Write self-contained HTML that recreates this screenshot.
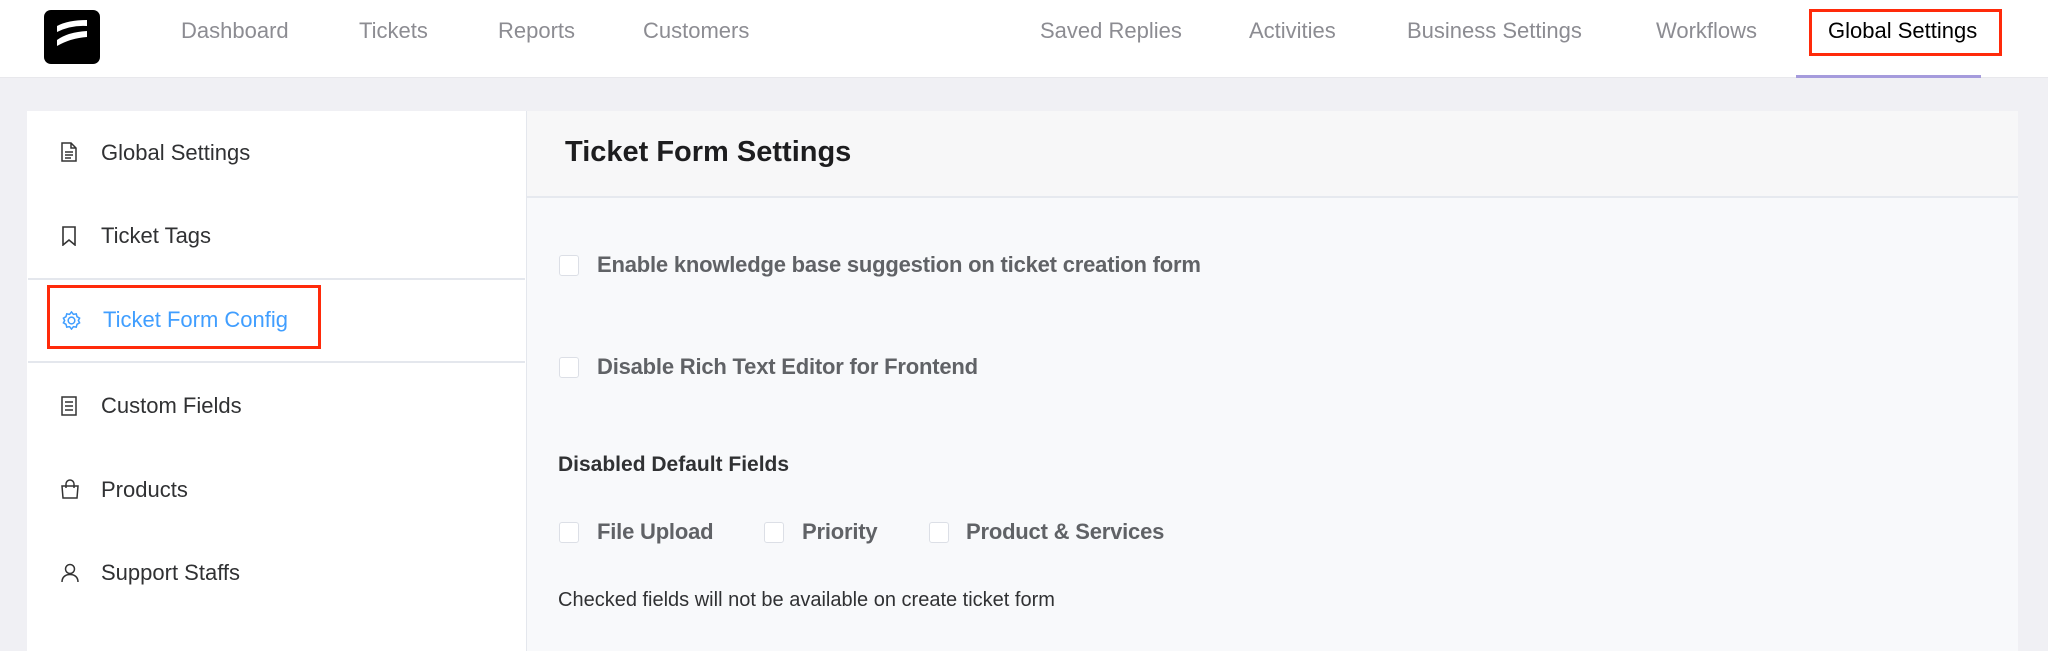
<!DOCTYPE html>
<html><head><meta charset="utf-8"><style>
*{margin:0;padding:0;box-sizing:border-box}
body{width:2048px;height:644px;overflow:hidden;background:#f0f0f4;font-family:"Liberation Sans",sans-serif;position:relative}
.a{position:absolute;white-space:nowrap}
.hdr{position:absolute;left:0;top:0;width:2048px;height:78px;background:#fff;border-bottom:1px solid #e8e8ec}
.nav{font-size:22px;color:#8c8c92;top:18px}
.side{position:absolute;left:27px;top:111px;width:499px;height:540px;background:#fff}
.si{font-size:22px;color:#303133;left:101px}
.ic{position:absolute;left:61px}
.main{position:absolute;left:526px;top:111px;width:1492px;height:540px;background:#f8f9fb;border-left:1px solid #e4e7ed}
.mh{position:absolute;left:0;top:0;width:100%;height:87px;background:#f7f7f8;border-bottom:2px solid #e6e9ef}
.cb{position:absolute;width:20px;height:21px;border:1.5px solid #dcdfe6;border-radius:3px;background:#fff}
.lb{font-size:22px;color:#606266;font-weight:bold;letter-spacing:-0.2px}
</style></head><body>
<div class="hdr"></div>
<div class="a" style="left:44px;top:10px;width:56px;height:54px;background:#000;border-radius:7px">
<svg width="56" height="54" viewBox="0 0 56 54"><path d="M13 22 L13 16 Q24 10 43 10 L43 16 Q27 15 13 22Z M13 36 L13 30 Q24 22 43 21 L43 27 Q27 28 13 36Z" fill="#fff"/></svg></div>
<div class="a nav" style="left:181px">Dashboard</div>
<div class="a nav" style="left:359px">Tickets</div>
<div class="a nav" style="left:498px">Reports</div>
<div class="a nav" style="left:643px">Customers</div>
<div class="a nav" style="left:1040px">Saved Replies</div>
<div class="a nav" style="left:1249px">Activities</div>
<div class="a nav" style="left:1407px">Business Settings</div>
<div class="a nav" style="left:1656px">Workflows</div>
<div class="a nav" style="left:1828px;color:#000">Global Settings</div>
<div class="a" style="left:1809px;top:9px;width:193px;height:47px;border:3px solid #ff2a0a"></div>
<div class="a" style="left:1796px;top:75px;width:185px;height:3px;background:#a59bdc"></div>

<div class="side"></div>
<svg class="ic" style="top:142px" width="16" height="20" viewBox="0 0 16 20" fill="none" stroke="#333" stroke-width="1.5"><path d="M1 1h9l5 5v13H1z M10 1v5h5 M4 10h8 M4 13h8 M4 16h6"/></svg>
<div class="a si" style="top:140px">Global Settings</div>
<svg class="ic" style="top:226px" width="16" height="20" viewBox="0 0 16 20" fill="none" stroke="#333" stroke-width="1.6"><path d="M2 1h12v18l-6-5-6 5z"/></svg>
<div class="a si" style="top:223px">Ticket Tags</div>
<div class="a" style="left:28px;top:278px;width:497px;height:85px;background:#fff;border-top:2px solid #e4e7ed;border-bottom:2px solid #e4e7ed"></div>
<svg class="ic" style="top:311px;left:62px" width="19" height="19" viewBox="0 0 20 20" fill="none" stroke="#409eff" stroke-width="1.6"><path d="M10 1l2 2.5 3-.5.8 3 2.7 1.5-1.3 2.5 1.3 2.5-2.7 1.5-.8 3-3-.5L10 19l-2-2.5-3 .5-.8-3L1.5 12.5 2.8 10 1.5 7.5 4.2 6l.8-3 3 .5z"/><circle cx="10" cy="10" r="3.5"/></svg>
<div class="a si" style="top:307px;left:103px;color:#409eff">Ticket Form Config</div>
<div class="a" style="left:47px;top:285px;width:274px;height:64px;border:3px solid #ff2a0a"></div>
<svg class="ic" style="top:396px" width="16" height="20" viewBox="0 0 16 20" fill="none" stroke="#333" stroke-width="1.5"><path d="M1 1h14v18H1z M4 6h8 M4 10h8 M4 14h8"/></svg>
<div class="a si" style="top:393px">Custom Fields</div>
<svg class="ic" style="top:479px" width="18" height="20" viewBox="0 0 18 20" fill="none" stroke="#333" stroke-width="1.5"><path d="M1 7h16l-1 12H2z M5 9V5a4 4 0 0 1 8 0v4"/></svg>
<div class="a si" style="top:477px">Products</div>
<svg class="ic" style="top:563px" width="18" height="20" viewBox="0 0 18 20" fill="none" stroke="#333" stroke-width="1.5"><circle cx="9" cy="6" r="4.5"/><path d="M1 19c0-5 3.5-7.5 8-7.5s8 2.5 8 7.5"/></svg>
<div class="a si" style="top:560px">Support Staffs</div>

<div class="main"><div class="mh"></div></div>
<div class="a" style="left:565px;top:136px;font-size:29px;font-weight:bold;color:#1d1d1f">Ticket Form Settings</div>
<div class="cb" style="left:559px;top:255px"></div>
<div class="a lb" style="left:597px;top:252px">Enable knowledge base suggestion on ticket creation form</div>
<div class="cb" style="left:559px;top:357px"></div>
<div class="a lb" style="left:597px;top:354px">Disable Rich Text Editor for Frontend</div>
<div class="a" style="left:558px;top:453px;font-size:21px;font-weight:bold;color:#303133">Disabled Default Fields</div>
<div class="cb" style="left:559px;top:522px"></div>
<div class="a lb" style="left:597px;top:519px">File Upload</div>
<div class="cb" style="left:764px;top:522px"></div>
<div class="a lb" style="left:802px;top:519px">Priority</div>
<div class="cb" style="left:929px;top:522px"></div>
<div class="a lb" style="left:966px;top:519px">Product &amp; Services</div>
<div class="a" style="left:558px;top:589px;font-size:20px;color:#303133">Checked fields will not be available on create ticket form</div>
</body></html>
